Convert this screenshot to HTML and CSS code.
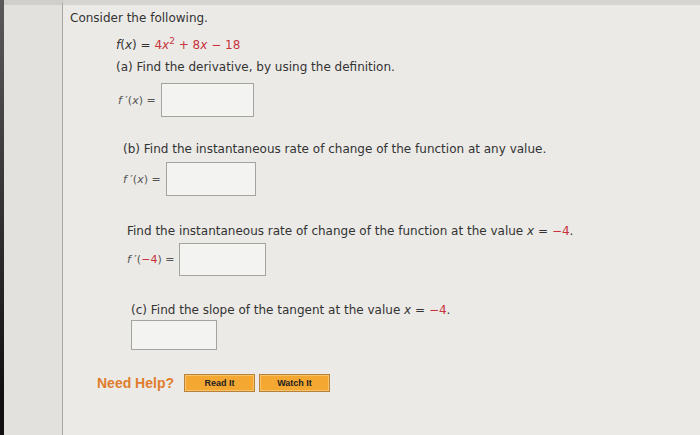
FILE: index.html
```html
<!DOCTYPE html>
<html>
<head>
<meta charset="utf-8">
<link rel="stylesheet" href="styles.css">
</head>
<body>
<div class="screen">
  <div class="edge"></div>
  <div class="gutter"></div>
  <main class="content">
    <p class="intro">Consider the following.</p>
    <p class="func ind-a"><i>f</i>(<i>x</i>) = <span class="red">4<i>x</i><sup>2</sup> + 8<i>x</i> − 18</span></p>
    <p class="q ind-a">(a) Find the derivative, by using the definition.</p>
    <div class="answer ind-a1"><span class="lbl"><i>f</i> ′(<i>x</i>) =</span><span class="box box-a"></span></div>

    <p class="q ind-b q-b">(b) Find the instantaneous rate of change of the function at any value.</p>
    <div class="answer ans-b ind-b"><span class="lbl"><i>f</i> ′(<i>x</i>) =</span><span class="box box-b"></span></div>

    <p class="q ind-c q-c">Find the instantaneous rate of change of the function at the value <i>x</i> = <span class="red">−4</span>.</p>
    <div class="answer ans-c ind-c"><span class="lbl"><i>f</i> ′(<span class="red">−4</span>) =</span><span class="box box-c"></span></div>

    <p class="q ind-d q-d">(c) Find the slope of the tangent at the value <i>x</i> = <span class="red">−4</span>.</p>
    <div class="answer ans-d ind-d"><span class="box box-d"></span></div>

    <div class="help">
      <span class="need">Need Help?</span>
      <span class="btn">Read It</span>
      <span class="btn">Watch It</span>
    </div>
  </main>
</div>
</body>
</html>
```

FILE: styles.css
```css
html, body {
  margin: 0;
  padding: 0;
}
body {
  width: 700px;
  height: 435px;
  overflow: hidden;
  background: #e8e7e4;
  font-family: "DejaVu Sans", Verdana, sans-serif;
  color: #333;
}
.screen {
  display: flex;
  height: 435px;
}
.edge {
  width: 4px;
  background: linear-gradient(#5a5a5a, #111 90%);
}
.gutter {
  width: 58px;
  background: #e2e1de;
  border-right: 1px solid #a9a8a5;
  border-top: 5px solid #d0cfcc;
}
.content {
  flex: 1;
  background: #ebeae7;
  border-top: 5px solid #d6d5d2;
  padding: 4px 0 0 7px;
  font-size: 12px;
}
p { margin: 0; }
.intro {
  font-size: 12px;
  line-height: 18px;
}
.func {
  margin-top: 9px;
  line-height: 18px;
}
.red { color: #c8343c; }
sup { font-size: 9px; line-height: 0; vertical-align: 5px; }
.q { line-height: 16px; margin-top: 5px; }
.ind-a { margin-left: 46px; }
.ind-a1 { margin-left: 48px; }
.ind-b { margin-left: 53px; }
.ind-c { margin-left: 57px; }
.ind-d { margin-left: 61px; }
.answer {
  display: flex;
  align-items: center;
  gap: 5px;
  margin-top: 8px;
}
.lbl { font-size: 11px; color: #555; }
.box {
  display: block;
  background: #f3f3f1;
  border: 1px solid #a3a3a0;
}
.box-a { width: 91px; height: 32px; }
.box-b { width: 88px; height: 32px; }
.box-c { width: 85px; height: 31px; }
.box-d { width: 84px; height: 28px; }
.q-b { margin-top: 24px; }
.ans-b { margin-top: 5px; }
.q-c { margin-top: 27px; }
.ans-c { margin-top: 4px; }
.q-d { margin-top: 26px; }
.ans-d { margin-top: 2px; }
.help {
  display: flex;
  align-items: center;
  margin: 24px 0 0 27px;
  gap: 4px;
}
.need {
  color: #e07d2c;
  font-family: "Liberation Sans", Arial, sans-serif;
  font-weight: bold;
  font-size: 14px;
  margin-right: 6px;
}
.btn {
  display: block;
  width: 69px;
  height: 16px;
  line-height: 16px;
  text-align: center;
  background: #f4a731;
  border: 1px solid #b9803a;
  box-shadow: inset 0 0 0 1px #f8c469;
  font-family: "Liberation Sans", Arial, sans-serif;
  font-weight: bold;
  font-size: 9px;
  color: #222;
}
```
